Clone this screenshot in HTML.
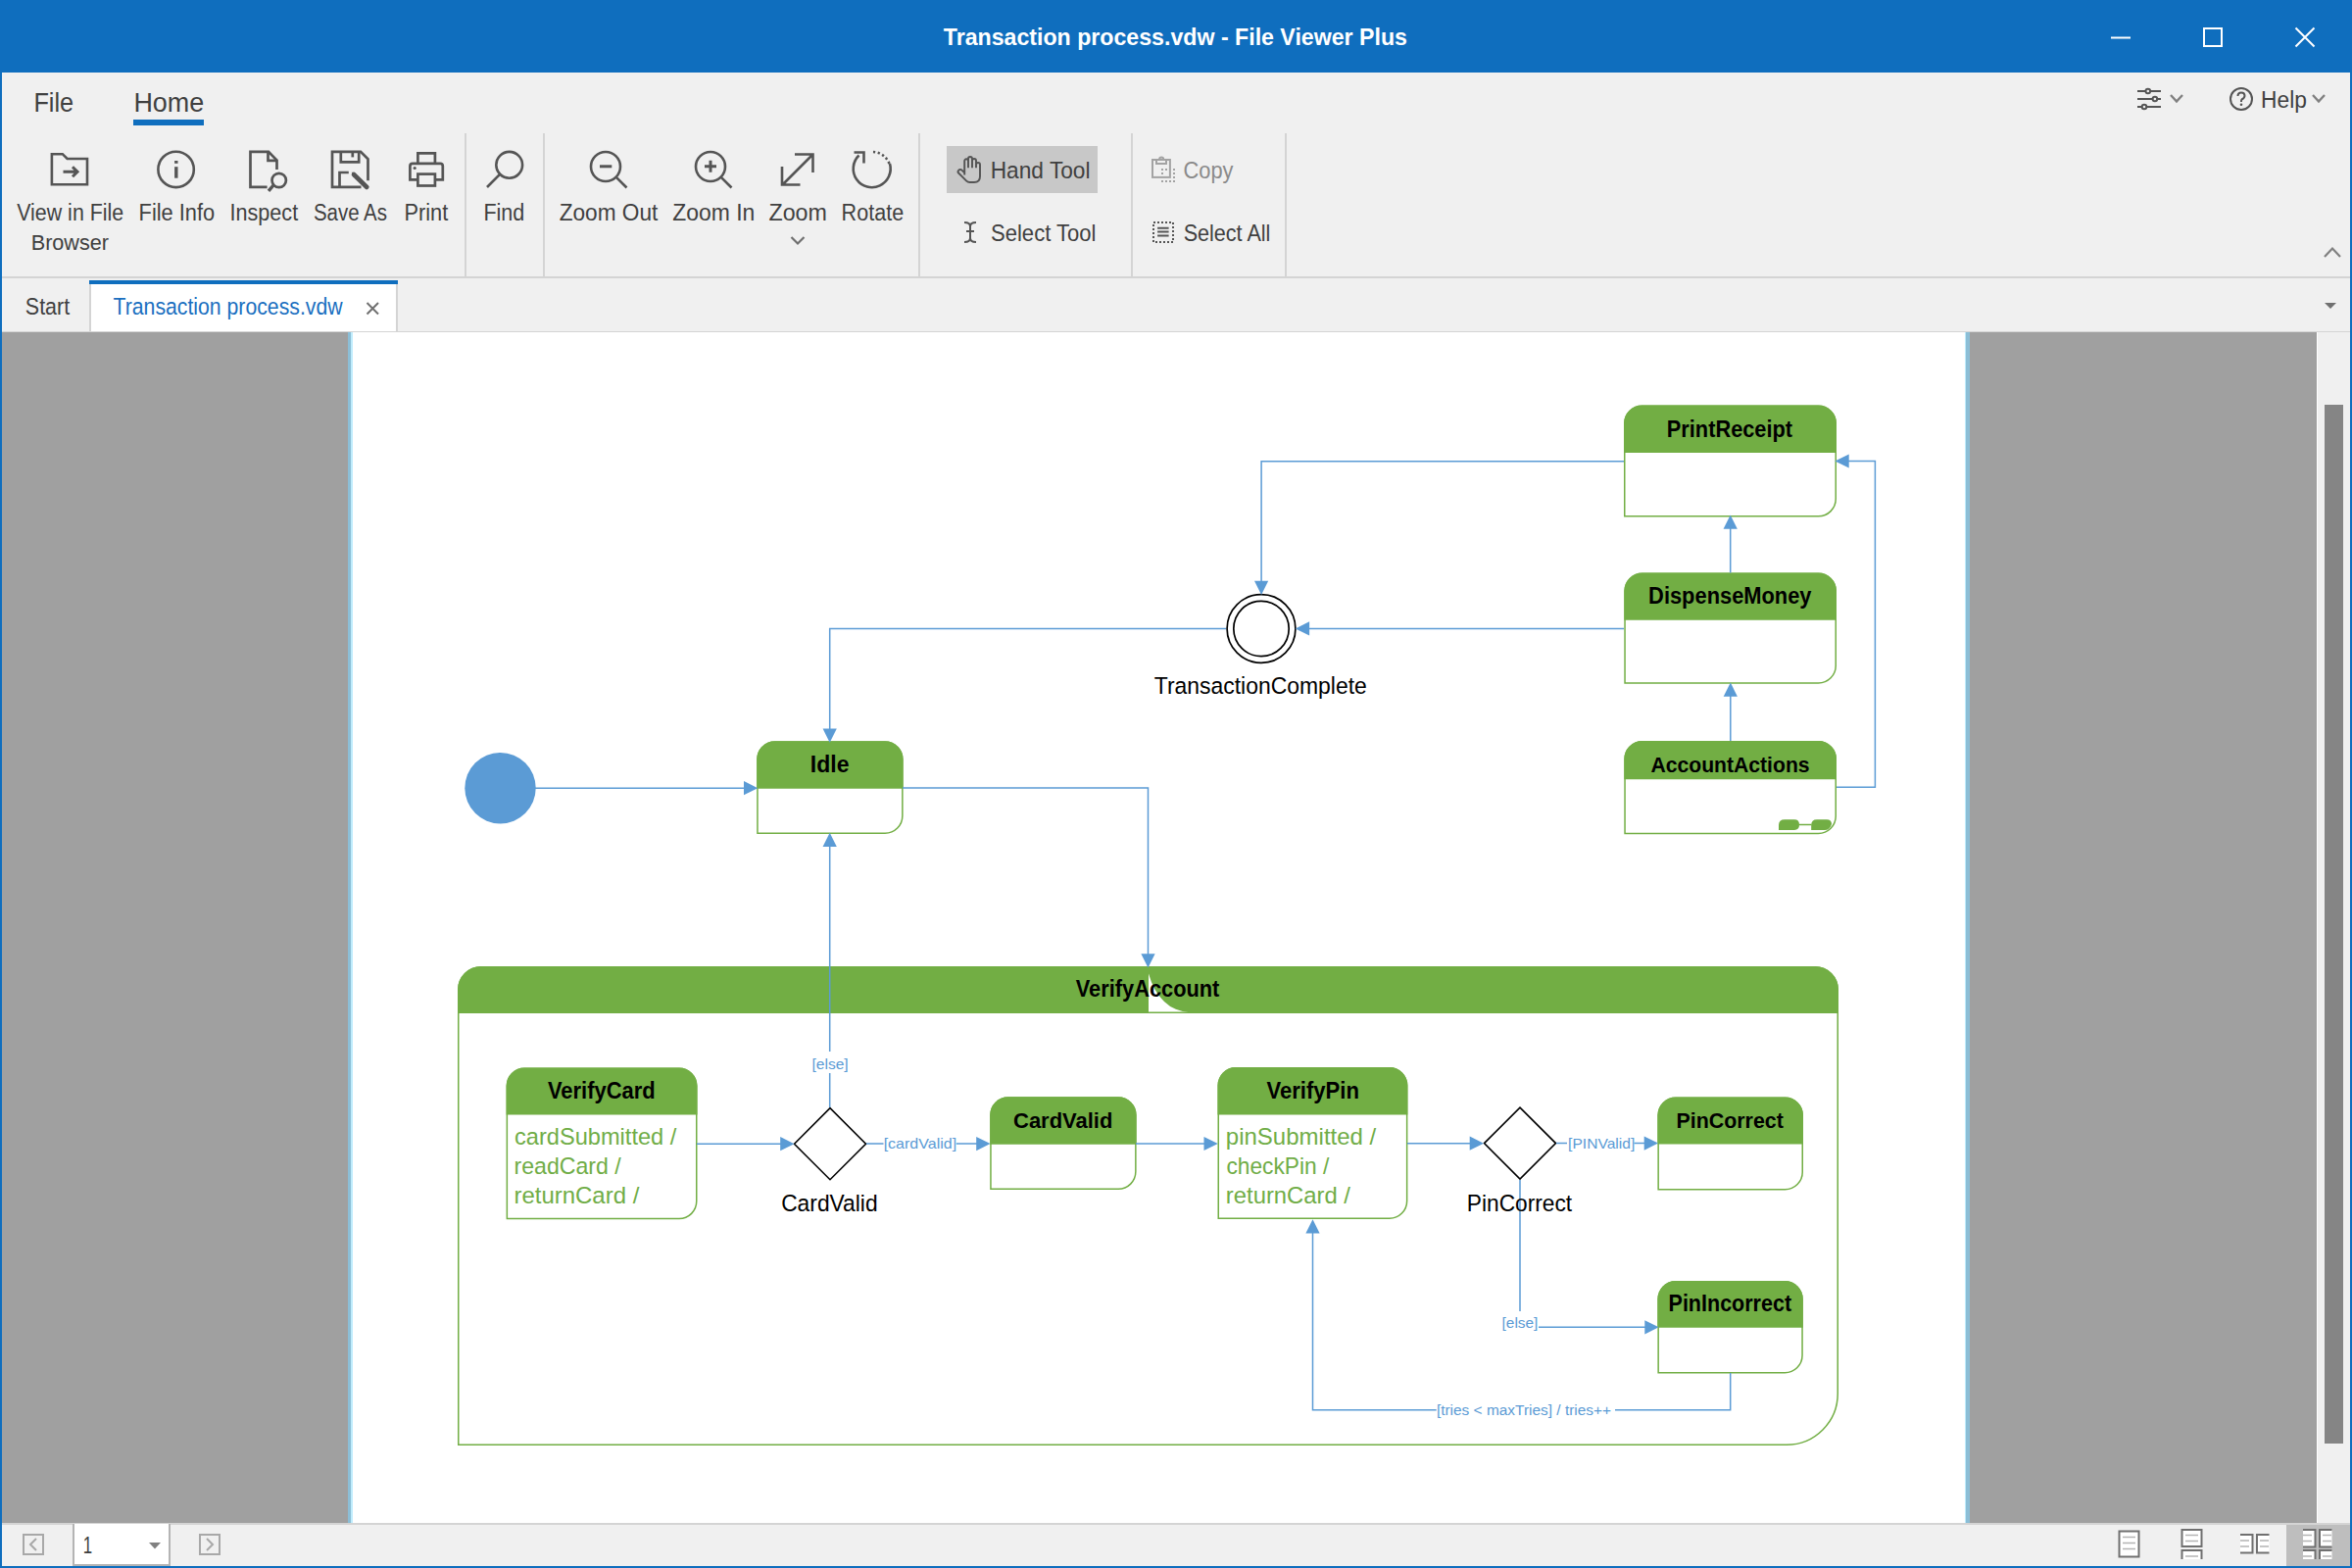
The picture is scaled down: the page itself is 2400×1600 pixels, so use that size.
<!DOCTYPE html>
<html><head><meta charset="utf-8"><title>Transaction process.vdw - File Viewer Plus</title>
<style>
html,body{margin:0;padding:0;width:2400px;height:1600px;overflow:hidden;background:#f0f0f0;font-family:"Liberation Sans",sans-serif}
.a{position:absolute;box-sizing:border-box}
svg text{font-family:"Liberation Sans",sans-serif}
</style></head><body>

<div class="a" style="left:0px;top:0px;width:2400px;height:1600px;background:#0F6EBE;"></div>
<div class="a" style="left:2px;top:74px;width:2396px;height:1524px;background:#f0f0f0;"></div>
<div class="a" style="left:2px;top:282px;width:2396px;height:2px;background:#d4d4d4;"></div>
<div class="a" style="left:91px;top:286px;width:315px;height:53px;background:#ffffff;border-left:2px solid #d4d4d4;border-right:2px solid #d4d4d4"></div>
<div class="a" style="left:91px;top:286px;width:315px;height:4px;background:#0F6EBE;"></div>
<div class="a" style="left:2px;top:338px;width:2396px;height:1px;background:#d4d4d4;"></div>
<div class="a" style="left:2px;top:339px;width:2362px;height:1215px;background:#a0a0a0;"></div>
<div class="a" style="left:355px;top:339px;width:3px;height:1215px;background:#8cbed6;"></div>
<div class="a" style="left:358px;top:339px;width:2px;height:1215px;background:#c0ecfc;"></div>
<div class="a" style="left:360px;top:339px;width:1645px;height:1215px;background:#ffffff;"></div>
<div class="a" style="left:2005px;top:339px;width:1px;height:1215px;background:#c0ecfc;"></div>
<div class="a" style="left:2006px;top:339px;width:4px;height:1215px;background:#8cbed6;"></div>
<div class="a" style="left:2364px;top:339px;width:1px;height:1215px;background:#ffffff;"></div>
<div class="a" style="left:2365px;top:339px;width:33px;height:1215px;background:#f0f0f0;"></div>
<div class="a" style="left:2372px;top:413px;width:19px;height:1060px;background:#858585;"></div>
<div class="a" style="left:2px;top:1554px;width:2396px;height:2px;background:#d4d4d4;"></div>
<div class="a" style="left:2px;top:1556px;width:2396px;height:42px;background:#f0f0f0;"></div>
<div class="a" style="left:2333px;top:1556px;width:65px;height:42px;background:#bebebe;"></div>
<div class="a" style="left:74px;top:1555px;width:100px;height:43px;background:#ffffff;border:2px solid #b4b4b4;border-top:none"></div>
<div class="a" style="left:966px;top:149px;width:154px;height:48px;background:#c8c8c8;"></div>
<svg class="a" style="left:0;top:0" width="2400" height="1600" viewBox="0 0 2400 1600">
<path d="M1657.75,526.85 V432.1 A17.75,17.75 0 0 1 1675.5,414.35 H1855.5 A17.75,17.75 0 0 1 1873.25,432.1 V509.1 A17.75,17.75 0 0 1 1855.5,526.85 Z" fill="#ffffff" stroke="#72ae44" stroke-width="1.5"/><path d="M1657,461.9 V432.1 A18.5,18.5 0 0 1 1675.5,413.6 H1855.5 A18.5,18.5 0 0 1 1874,432.1 V461.9 Z" fill="#72ae44"/>
<path d="M1658.05,696.95 V603.0 A17.75,17.75 0 0 1 1675.8,585.25 H1855.5 A17.75,17.75 0 0 1 1873.25,603.0 V679.2 A17.75,17.75 0 0 1 1855.5,696.95 Z" fill="#ffffff" stroke="#72ae44" stroke-width="1.5"/><path d="M1657.3,632.7 V603.0 A18.5,18.5 0 0 1 1675.8,584.5 H1855.5 A18.5,18.5 0 0 1 1874,603.0 V632.7 Z" fill="#72ae44"/>
<path d="M1658.05,850.45 V774.5 A17.75,17.75 0 0 1 1675.8,756.75 H1855.5 A17.75,17.75 0 0 1 1873.25,774.5 V832.7 A17.75,17.75 0 0 1 1855.5,850.45 Z" fill="#ffffff" stroke="#72ae44" stroke-width="1.5"/><path d="M1657.3,795.3 V774.5 A18.5,18.5 0 0 1 1675.8,756 H1855.5 A18.5,18.5 0 0 1 1874,774.5 V795.3 Z" fill="#72ae44"/>
<path d="M772.95,850.25 V774.8 A17.75,17.75 0 0 1 790.7,757.05 H903.1 A17.75,17.75 0 0 1 920.85,774.8 V832.5 A17.75,17.75 0 0 1 903.1,850.25 Z" fill="#ffffff" stroke="#72ae44" stroke-width="1.5"/><path d="M772.2,804.7 V774.8 A18.5,18.5 0 0 1 790.7,756.3 H903.1 A18.5,18.5 0 0 1 921.6,774.8 V804.7 Z" fill="#72ae44"/>
<path d="M467.75,1474.25 V1010.0 A23.25,23.25 0 0 1 491.0,986.75 H1852.0 A23.25,23.25 0 0 1 1875.25,1010.0 V1422.0 A52.25,52.25 0 0 1 1823.0,1474.25 Z" fill="#ffffff" stroke="#72ae44" stroke-width="1.5"/><path d="M467,1033.9 V1010 A24,24 0 0 1 491,986 H1852 A24,24 0 0 1 1876,1010 V1033.9 Z" fill="#72ae44"/>
<path d="M517.35,1243.55 V1108.1 A17.75,17.75 0 0 1 535.1,1090.35 H693.0 A17.75,17.75 0 0 1 710.75,1108.1 V1225.8 A17.75,17.75 0 0 1 693.0,1243.55 Z" fill="#ffffff" stroke="#72ae44" stroke-width="1.5"/><path d="M516.6,1137.6 V1108.1 A18.5,18.5 0 0 1 535.1,1089.6 H693.0 A18.5,18.5 0 0 1 711.5,1108.1 V1137.6 Z" fill="#72ae44"/>
<path d="M1010.95,1213.35 V1137.8 A17.75,17.75 0 0 1 1028.7,1120.05 H1141.1 A17.75,17.75 0 0 1 1158.85,1137.8 V1195.6 A17.75,17.75 0 0 1 1141.1,1213.35 Z" fill="#ffffff" stroke="#72ae44" stroke-width="1.5"/><path d="M1010.2,1167.8 V1137.8 A18.5,18.5 0 0 1 1028.7,1119.3 H1141.1 A18.5,18.5 0 0 1 1159.6,1137.8 V1167.8 Z" fill="#72ae44"/>
<path d="M1243.25,1243.15 V1107.6 A17.75,17.75 0 0 1 1261.0,1089.85 H1417.9 A17.75,17.75 0 0 1 1435.65,1107.6 V1225.4 A17.75,17.75 0 0 1 1417.9,1243.15 Z" fill="#ffffff" stroke="#72ae44" stroke-width="1.5"/><path d="M1242.5,1137.6 V1107.6 A18.5,18.5 0 0 1 1261.0,1089.1 H1417.9 A18.5,18.5 0 0 1 1436.4,1107.6 V1137.6 Z" fill="#72ae44"/>
<path d="M1692.15,1213.65 V1138.1 A17.75,17.75 0 0 1 1709.9,1120.35 H1821.5 A17.75,17.75 0 0 1 1839.25,1138.1 V1195.9 A17.75,17.75 0 0 1 1821.5,1213.65 Z" fill="#ffffff" stroke="#72ae44" stroke-width="1.5"/><path d="M1691.4,1167.6 V1138.1 A18.5,18.5 0 0 1 1709.9,1119.6 H1821.5 A18.5,18.5 0 0 1 1840,1138.1 V1167.6 Z" fill="#72ae44"/>
<path d="M1692.15,1400.65 V1325.6 A17.75,17.75 0 0 1 1709.9,1307.85 H1821.3 A17.75,17.75 0 0 1 1839.05,1325.6 V1382.9 A17.75,17.75 0 0 1 1821.3,1400.65 Z" fill="#ffffff" stroke="#72ae44" stroke-width="1.5"/><path d="M1691.4,1354.8 V1325.6 A18.5,18.5 0 0 1 1709.9,1307.1 H1821.3 A18.5,18.5 0 0 1 1839.8,1325.6 V1354.8 Z" fill="#72ae44"/>
<path d="M1172,993.6 A43.6,60.5 0 0 0 1212.7,1032.6 L1172,1032.6 Z" fill="#ffffff"/>
<path d="M1815,847 V842 Q1815,836.2 1821,836.2 H1831 Q1836,836.2 1836,841.6 Q1836,847 1831,847 Z" fill="#72ae44"/>
<path d="M1848.2,847 V842 Q1848.2,836.2 1854,836.2 H1864 Q1869,836.2 1869,841 Q1867,847 1862,847 Z" fill="#72ae44"/>
<path d="M1836,841.5 H1848.5" stroke="#72ae44" stroke-width="1.5"/>
<circle cx="510.5" cy="804.2" r="36.2" fill="#5b9bd5"/>
<circle cx="1287" cy="641.5" r="34.9" fill="#ffffff" stroke="#000" stroke-width="1.7"/>
<circle cx="1287" cy="641.5" r="28.2" fill="none" stroke="#000" stroke-width="1.7"/>
<path d="M810.5,1167.2 L847,1130.7 L883.5,1167.2 L847,1203.7 Z" fill="#ffffff" stroke="#000" stroke-width="1.6"/>
<path d="M1514.5,1166.6 L1551,1130.1 L1587.5,1166.6 L1551,1203.1 Z" fill="#ffffff" stroke="#000" stroke-width="1.6"/>
<g fill="none" stroke="#5b9bd5" stroke-width="1.5">
<path d="M546,804.2 H762"/>
<path d="M921,804 H1171.5 V975"/>
<path d="M846.7,1130 V1095 M846.7,1073 V862"/>
<path d="M1251,641.5 H846.7 V746"/>
<path d="M1657,470.7 H1287.1 V595"/>
<path d="M1657,641.4 H1334"/>
<path d="M1765.8,756 V708"/>
<path d="M1765.7,584.5 V538"/>
<path d="M1874,803.3 H1913.4 V470.5 H1884"/>
<path d="M711,1167.2 H798"/>
<path d="M884,1167.1 H901.5 M975.8,1167.1 H1000"/>
<path d="M1159,1167 H1232"/>
<path d="M1436,1166.7 H1502"/>
<path d="M1588,1166.6 H1599 M1667.5,1166.6 H1680"/>
<path d="M1551,1204 V1338 M1570,1354.3 H1681"/>
<path d="M1765.7,1401 V1438.8 H1648 M1465.7,1438.8 H1339.5 V1254"/>
</g>
<path d="M773.30,804.20 L759.00,797.10 L759.00,811.30 Z" fill="#5b9bd5"/>
<path d="M1171.50,987.50 L1164.40,973.20 L1178.60,973.20 Z" fill="#5b9bd5"/>
<path d="M846.70,849.80 L839.60,864.10 L853.80,864.10 Z" fill="#5b9bd5"/>
<path d="M846.70,757.80 L839.60,743.50 L853.80,743.50 Z" fill="#5b9bd5"/>
<path d="M1287.10,607.00 L1280.00,592.70 L1294.20,592.70 Z" fill="#5b9bd5"/>
<path d="M1321.80,641.40 L1336.10,634.30 L1336.10,648.50 Z" fill="#5b9bd5"/>
<path d="M1765.80,696.40 L1758.70,710.70 L1772.90,710.70 Z" fill="#5b9bd5"/>
<path d="M1765.70,525.40 L1758.60,539.70 L1772.80,539.70 Z" fill="#5b9bd5"/>
<path d="M1872.40,470.50 L1886.70,463.40 L1886.70,477.60 Z" fill="#5b9bd5"/>
<path d="M810.50,1167.20 L796.20,1160.10 L796.20,1174.30 Z" fill="#5b9bd5"/>
<path d="M1010.50,1167.10 L996.20,1160.00 L996.20,1174.20 Z" fill="#5b9bd5"/>
<path d="M1242.80,1167.00 L1228.50,1159.90 L1228.50,1174.10 Z" fill="#5b9bd5"/>
<path d="M1514.00,1166.70 L1499.70,1159.60 L1499.70,1173.80 Z" fill="#5b9bd5"/>
<path d="M1692.00,1166.60 L1677.70,1159.50 L1677.70,1173.70 Z" fill="#5b9bd5"/>
<path d="M1692.60,1354.30 L1678.30,1347.20 L1678.30,1361.40 Z" fill="#5b9bd5"/>
<path d="M1339.50,1244.20 L1332.40,1258.50 L1346.60,1258.50 Z" fill="#5b9bd5"/>
<text x="1700.83" y="446.30" font-size="24.13" font-weight="bold" fill="#000000" textLength="128.25" lengthAdjust="spacingAndGlyphs">PrintReceipt</text>
<text x="1682.12" y="616.20" font-size="23.55" font-weight="bold" fill="#000000" textLength="166.41" lengthAdjust="spacingAndGlyphs">DispenseMoney</text>
<text x="1684.47" y="788.00" font-size="22.82" font-weight="bold" fill="#000000" textLength="162.12" lengthAdjust="spacingAndGlyphs">AccountActions</text>
<text x="826.85" y="788.40" font-size="23.84" font-weight="bold" fill="#000000" textLength="39.60" lengthAdjust="spacingAndGlyphs">Idle</text>
<text x="1097.74" y="1017.00" font-size="23.55" font-weight="bold" fill="#000000" textLength="146.62" lengthAdjust="spacingAndGlyphs">VerifyAccount</text>
<text x="558.94" y="1120.90" font-size="23.26" font-weight="bold" fill="#000000" textLength="109.69" lengthAdjust="spacingAndGlyphs">VerifyCard</text>
<text x="1034.02" y="1150.70" font-size="22.09" font-weight="bold" fill="#000000" textLength="101.32" lengthAdjust="spacingAndGlyphs">CardValid</text>
<text x="1292.43" y="1120.90" font-size="23.11" font-weight="bold" fill="#000000" textLength="94.49" lengthAdjust="spacingAndGlyphs">VerifyPin</text>
<text x="1710.56" y="1150.80" font-size="21.80" font-weight="bold" fill="#000000" textLength="109.21" lengthAdjust="spacingAndGlyphs">PinCorrect</text>
<text x="1702.55" y="1337.90" font-size="23.11" font-weight="bold" fill="#000000" textLength="125.52" lengthAdjust="spacingAndGlyphs">PinIncorrect</text>
<text x="1177.78" y="708.00" font-size="23.55" fill="#000000" textLength="217.09" lengthAdjust="spacingAndGlyphs">TransactionComplete</text>
<text x="797.16" y="1235.80" font-size="23.11" fill="#000000" textLength="98.41" lengthAdjust="spacingAndGlyphs">CardValid</text>
<text x="1496.82" y="1235.80" font-size="23.11" fill="#000000" textLength="107.37" lengthAdjust="spacingAndGlyphs">PinCorrect</text>
<text x="525.00" y="1167.80" font-size="23.26" fill="#70ad47" textLength="165.33" lengthAdjust="spacingAndGlyphs">cardSubmitted /</text>
<text x="524.50" y="1197.50" font-size="23.26" fill="#70ad47" textLength="109.30" lengthAdjust="spacingAndGlyphs">readCard /</text>
<text x="524.44" y="1227.70" font-size="23.26" fill="#70ad47" textLength="127.87" lengthAdjust="spacingAndGlyphs">returnCard /</text>
<text x="1250.84" y="1167.80" font-size="23.26" fill="#70ad47" textLength="153.47" lengthAdjust="spacingAndGlyphs">pinSubmitted /</text>
<text x="1251.43" y="1197.50" font-size="23.26" fill="#70ad47" textLength="104.89" lengthAdjust="spacingAndGlyphs">checkPin /</text>
<text x="1250.85" y="1227.70" font-size="23.26" fill="#70ad47" textLength="127.16" lengthAdjust="spacingAndGlyphs">returnCard /</text>
<text x="828.41" y="1091.14" font-size="15.23" fill="#5b9bd5" textLength="37.29" lengthAdjust="spacingAndGlyphs">[else]</text>
<text x="901.68" y="1172.26" font-size="14.16" fill="#5b9bd5" textLength="74.45" lengthAdjust="spacingAndGlyphs">[cardValid]</text>
<text x="1600.11" y="1172.01" font-size="14.91" fill="#5b9bd5" textLength="68.18" lengthAdjust="spacingAndGlyphs">[PINValid]</text>
<text x="1532.52" y="1354.78" font-size="14.05" fill="#5b9bd5" textLength="36.86" lengthAdjust="spacingAndGlyphs">[else]</text>
<text x="1465.92" y="1443.82" font-size="15.34" fill="#5b9bd5" textLength="178.15" lengthAdjust="spacingAndGlyphs">[tries &lt; maxTries] / tries++</text>
<text x="962.77" y="45.80" font-size="23.69" font-weight="bold" fill="#ffffff" textLength="473.20" lengthAdjust="spacingAndGlyphs">Transaction process.vdw - File Viewer Plus</text>
<g stroke="#ffffff" stroke-width="2" fill="none">
<path d="M2154,38.5 H2174"/>
<rect x="2249" y="29" width="18" height="18"/>
<path d="M2342.5,28.5 L2361.5,47.5 M2361.5,28.5 L2342.5,47.5"/>
</g>
<text x="34.42" y="114.00" font-size="27.76" fill="#404040" textLength="40.69" lengthAdjust="spacingAndGlyphs">File</text>
<text x="136.38" y="114.00" font-size="27.76" fill="#404040" textLength="71.87" lengthAdjust="spacingAndGlyphs">Home</text>
<rect x="136" y="122" width="72" height="6" fill="#0F6EBE"/>
<rect x="474" y="136" width="2" height="146" fill="#d4d4d4"/>
<rect x="554" y="136" width="2" height="146" fill="#d4d4d4"/>
<rect x="937" y="136" width="2" height="146" fill="#d4d4d4"/>
<rect x="1154" y="136" width="2" height="146" fill="#d4d4d4"/>
<rect x="1311" y="136" width="2" height="146" fill="#d4d4d4"/>
<text x="17.19" y="224.95" font-size="23.33" fill="#404040" textLength="109.02" lengthAdjust="spacingAndGlyphs">View in File</text>
<text x="141.60" y="224.95" font-size="23.33" fill="#404040" textLength="77.52" lengthAdjust="spacingAndGlyphs">File Info</text>
<text x="234.60" y="224.95" font-size="23.33" fill="#404040" textLength="69.54" lengthAdjust="spacingAndGlyphs">Inspect</text>
<text x="319.88" y="224.95" font-size="23.33" fill="#404040" textLength="75.12" lengthAdjust="spacingAndGlyphs">Save As</text>
<text x="412.40" y="224.95" font-size="23.33" fill="#404040" textLength="44.79" lengthAdjust="spacingAndGlyphs">Print</text>
<text x="493.42" y="224.95" font-size="23.33" fill="#404040" textLength="41.93" lengthAdjust="spacingAndGlyphs">Find</text>
<text x="570.66" y="224.95" font-size="23.33" fill="#404040" textLength="100.63" lengthAdjust="spacingAndGlyphs">Zoom Out</text>
<text x="686.26" y="224.95" font-size="23.33" fill="#404040" textLength="83.99" lengthAdjust="spacingAndGlyphs">Zoom In</text>
<text x="784.44" y="224.95" font-size="23.33" fill="#404040" textLength="59.39" lengthAdjust="spacingAndGlyphs">Zoom</text>
<text x="858.62" y="224.95" font-size="23.33" fill="#404040" textLength="63.53" lengthAdjust="spacingAndGlyphs">Rotate</text>
<text x="31.72" y="254.70" font-size="22.67" fill="#404040" textLength="79.31" lengthAdjust="spacingAndGlyphs">Browser</text>
<text x="1010.73" y="182.20" font-size="24.71" fill="#404040" textLength="101.81" lengthAdjust="spacingAndGlyphs">Hand Tool</text>
<text x="1011.01" y="246.10" font-size="24.27" fill="#404040" textLength="107.45" lengthAdjust="spacingAndGlyphs">Select Tool</text>
<text x="1207.51" y="182.20" font-size="24.71" fill="#8a8a8a" textLength="50.94" lengthAdjust="spacingAndGlyphs">Copy</text>
<text x="1207.63" y="246.10" font-size="24.27" fill="#404040" textLength="88.79" lengthAdjust="spacingAndGlyphs">Select All</text>
<text x="2307.12" y="110.00" font-size="23.62" fill="#404040" textLength="46.83" lengthAdjust="spacingAndGlyphs">Help</text>
<text x="25.83" y="321.00" font-size="23.55" fill="#404040" textLength="45.31" lengthAdjust="spacingAndGlyphs">Start</text>
<text x="115.52" y="321.00" font-size="23.55" fill="#1a6fc0" textLength="234.04" lengthAdjust="spacingAndGlyphs">Transaction process.vdw</text>
<path d="M374.5,309 L386,320.5 M386,309 L374.5,320.5" stroke="#707070" stroke-width="2"/>
<text x="84.63" y="1584.60" font-size="23.55" fill="#404040" textLength="9.39" lengthAdjust="spacingAndGlyphs">1</text>
<g fill="none" stroke="#555555" stroke-width="2.6">
<path d="M52.9,188.3 V157.2 H63.8 L68.6,162 H89 V188.3 Z"/>
</g>
<path d="M64.5,175.3 H77 M74,170.3 L79,175.3 L74,180.3" fill="none" stroke="#555555" stroke-width="3"/>
<circle cx="179.6" cy="172.9" r="18.2" fill="none" stroke="#555555" stroke-width="2.6"/>
<rect x="178.1" y="170.2" width="3.4" height="11.5" fill="#555555"/><rect x="178.1" y="164" width="3.4" height="2.8" fill="#555555"/>
<g fill="none" stroke="#555555" stroke-width="2.7">
<path d="M272.6,190.8 H255.5 V154.8 H274 L282.5,163.5 V173"/>
<path d="M273.5,155 V163.9 H282.5"/>
<circle cx="284.7" cy="184" r="7.2"/>
</g>
<path d="M279.5,188.5 L274,194.8" stroke="#555555" stroke-width="3.4"/>
<g fill="none" stroke="#555555" stroke-width="2.7">
<path d="M368.5,190.8 H339 V154.8 H368 L375.5,162.3 V184.3"/>
<path d="M347.8,155 V165.4 H366.2 V155"/>
<path d="M359.8,155.5 V160.4"/>
<path d="M346.5,191 V176 H355.8"/>
</g>
<path d="M361,178 L374.3,191" stroke="#555555" stroke-width="4.6" stroke-linecap="round"/>
<path d="M358.8,175.5 L362.5,177 L360.8,181 Z" fill="#555555"/>
<g fill="none" stroke="#555555" stroke-width="2.7">
<path d="M426.4,166 V156.4 H443.9 V166"/>
<path d="M426.4,183.4 H418.4 V169.5 Q418.4,166.9 421,166.9 H449.2 Q451.8,166.9 451.8,169.5 V183.4 H443.9"/>
<rect x="426.4" y="177.6" width="17.5" height="11.9"/>
</g>
<circle cx="423.2" cy="171.5" r="1.6" fill="#555555"/>
<g fill="none" stroke="#555555" stroke-width="2.6">
<circle cx="519.7" cy="168.3" r="13.4"/>
<path d="M510.5,177.5 L497,191"/>
<circle cx="618" cy="170" r="15"/>
<path d="M628.8,180.8 L639.5,191.5"/>
<path d="M612,169.8 H624.3" stroke-width="3"/>
<circle cx="725" cy="170" r="15"/>
<path d="M735.8,180.8 L746.5,191.5"/>
<path d="M719,169.8 H731 M725,163.8 V175.8" stroke-width="3"/>
<path d="M799.5,187.5 L829,158 M811,157.5 H829.5 V176 M798,170 V188.5 H816.5"/>
<path d="M876.5,158.5 A19,19 0 1 0 908,167" />
<path d="M881.5,166.5 V155.5 H871.5"/>
</g>
<path d="M891,155 A18.5,18.5 0 0 1 907.8,168" fill="none" stroke="#555555" stroke-width="2.6" stroke-dasharray="2.2,2.6"/>
<path d="M807.5,242 L814,248.5 L820.5,242" fill="none" stroke="#707070" stroke-width="2.2"/>
<path d="M984.2,178.6 V164.2 A1.9,1.9 0 0 1 988,164.2 V171.2 M988,171.2 V161.9 A2,2 0 0 1 992,161.9 V171.2 M992,164 A2,2 0 0 1 996,164 V171.2 M996,168 A2,2 0 0 1 1000,168 V180 Q1000,186 994,186 H989.5 Q987.6,186 986.2,184.6 L978.3,176.8 A2.25,2.25 0 0 1 981.5,173.6 L984.2,176.4" fill="none" stroke="#555555" stroke-width="1.95" stroke-linejoin="round"/>
<path d="M984,227 Q990,227 990,231 V243 Q990,247 984,247 M996,227 Q990,227 990,231 M996,247 Q990,247 990,243 M986,236 H994" fill="none" stroke="#555555" stroke-width="2"/>
<g fill="none" stroke="#a3a3a3" stroke-width="2">
<rect x="1176" y="163" width="17.9" height="17.9"/>
<rect x="1180" y="163" width="10" height="4"/>
<path d="M1183.1,162.6 A2.05,2.05 0 0 1 1187.2,162.6"/>
</g>
<g fill="#a3a3a3"><rect x="1185" y="172" width="2" height="2"/><rect x="1189" y="172" width="2" height="2"/><rect x="1185" y="176" width="2" height="2"/><rect x="1197" y="172" width="2" height="2"/><rect x="1197" y="176" width="2" height="2"/><rect x="1197" y="180" width="2" height="2"/><rect x="1197" y="184" width="2" height="2"/><rect x="1185" y="184" width="2" height="2"/><rect x="1189" y="184" width="2" height="2"/><rect x="1193" y="184" width="2" height="2"/></g>
<rect x="1177" y="227" width="20" height="20" fill="none" stroke="#555555" stroke-width="2" stroke-dasharray="2,2"/>
<path d="M1181.1,232.8 H1192.6 M1181.1,236.6 H1192.6 M1181.1,240.4 H1192.6" stroke="#555555" stroke-width="2"/>
<g fill="none" stroke="#555555" stroke-width="2">
<path d="M2181,93 H2189.5 M2194,93 H2205 M2181,101 H2196.6 M2201.2,101 H2205 M2181,109 H2185.7 M2190.3,109 H2205"/>
<circle cx="2191.8" cy="93" r="2.3"/><circle cx="2198.9" cy="101" r="2.3"/><circle cx="2188" cy="109" r="2.3"/>
</g>
<path d="M2215,97 L2221,103.5 L2227,97 M2360,97 L2366,103.5 L2372,97" fill="none" stroke="#808080" stroke-width="2.4"/>
<circle cx="2287" cy="101" r="11" fill="none" stroke="#555555" stroke-width="2"/>
<path d="M2283.5,98 Q2283.5,94.5 2287,94.5 Q2290.5,94.5 2290.5,97.8 Q2290.5,100 2287.5,101.5 Q2287,102 2287,104" fill="none" stroke="#555555" stroke-width="2"/>
<circle cx="2287" cy="106.8" r="1.3" fill="#555555"/>
<path d="M2372,262 L2380,253.5 L2388,262" fill="none" stroke="#808080" stroke-width="2.2"/>
<path d="M2372,309 H2384 L2378,315 Z" fill="#707070"/>
<g fill="none" stroke="#a8a8a8" stroke-width="2">
<rect x="24" y="1566" width="20" height="20"/><rect x="204" y="1566" width="20" height="20"/>
<path d="M37,1570 L31,1576 L37,1582 M211,1570 L217,1576 L211,1582"/>
</g>
<path d="M152,1574 H164 L158,1580.5 Z" fill="#808080"/>
<g fill="#ffffff" stroke="none">
<rect x="2162.5" y="1562.5" width="20" height="26"/><rect x="2226.5" y="1561" width="20" height="17"/><rect x="2226.5" y="1582" width="20" height="9"/>
<rect x="2286" y="1566" width="12.5" height="18.5"/><rect x="2303" y="1566" width="12.5" height="18.5"/>
<rect x="2350" y="1561" width="12.5" height="17.5"/><rect x="2367" y="1561" width="12.5" height="17.5"/><rect x="2350" y="1582" width="12.5" height="9"/><rect x="2367" y="1582" width="12.5" height="9"/>
</g>
<g fill="none" stroke="#707070" stroke-width="2">
<rect x="2162.5" y="1562.5" width="20" height="26"/>
<rect x="2226.5" y="1561" width="20" height="17"/>
<path d="M2226.5,1591 V1582 H2246.5 V1591"/>
<path d="M2286,1566 H2298.5 V1584.5 H2286 M2315.5,1566 H2303 V1584.5 H2315.5"/>
<path d="M2350,1561 H2362.5 V1578.5 H2350 M2379.5,1561 H2367 V1578.5 H2379.5 M2350,1582 H2362.5 V1591 M2379.5,1582 H2367 V1591"/>
</g>
<g stroke="#b4b4b4" stroke-width="1.6">
<path d="M2166,1568.5 H2179 M2166,1574.5 H2179 M2166,1580.5 H2179"/>
<path d="M2230,1566.5 H2243 M2230,1572.5 H2243 M2230,1588 H2243"/>
<path d="M2286,1572 H2295 M2286,1578 H2295 M2306,1572 H2315 M2306,1578 H2315"/>
<path d="M2350,1566.5 H2359 M2350,1572.5 H2359 M2370,1566.5 H2379 M2370,1572.5 H2379 M2350,1588 H2359 M2370,1588 H2379"/>
</g>
</svg>
</body></html>
